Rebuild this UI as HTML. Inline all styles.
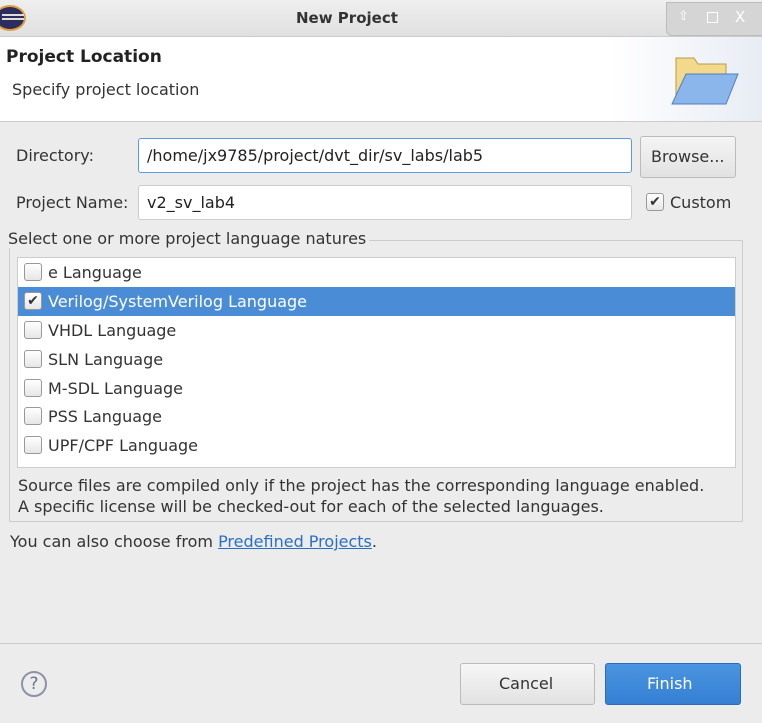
<!DOCTYPE html>
<html><head><style>
body{margin:0;width:762px;height:723px;overflow:hidden;background:#ececec;font-family:"DejaVu Sans","Liberation Sans",sans-serif;font-size:16px;color:#333;position:relative}
.a{position:absolute;white-space:nowrap}
.cb{position:absolute;width:16px;height:16px;border:1px solid #999;border-radius:3px;background:linear-gradient(#fff,#e6e6e6)}
.row{position:absolute;left:18px;width:717px;height:29px}
.row span{position:absolute;left:30px;top:5px}
.row .cb{left:6px;top:5px}
</style></head><body>
<div class="a" style="left:0;top:0;width:762px;height:36px;background:linear-gradient(#efefef,#e0e0e0);border-bottom:1px solid #ccc"></div>
<div class="a" style="left:-6px;top:5px;width:32px;height:26px;border-radius:50%;background:#2c2c5e;border:2px solid #e0a040;box-sizing:border-box"></div>
<div class="a" style="left:2px;top:14px;width:22px;height:2px;background:#ddd;box-shadow:0 4px 0 #ddd"></div>
<div class="a" style="left:296px;top:9px;font-weight:bold;font-size:15px;color:#333">New Project</div>
<div class="a" style="left:666px;top:2px;width:96px;height:32px;background:#d5d5d5;border-radius:0 0 0 6px;border:1px solid #bbb"></div>
<div class="a" style="left:678px;top:9px;font-size:13px;color:#fff">⇧</div>
<div class="a" style="left:707px;top:12px;width:9px;height:9px;border:1px solid #fff"></div>
<div class="a" style="left:735px;top:8px;font-size:15px;color:#fff">X</div>
<div class="a" style="left:0;top:37px;width:762px;height:84px;background:linear-gradient(90deg,#fff 80%,#e8ecf4);border-bottom:1px solid #ccc"></div>
<div class="a" style="left:6px;top:47px;font-weight:bold;font-size:17px;color:#222">Project Location</div>
<div class="a" style="left:12px;top:80px;color:#333">Specify project location</div>
<svg class="a" style="left:666px;top:52px" width="76" height="54"><path d="M10 6h18l4 6h28v38H10z" fill="#f3d98c" stroke="#b99a4a"/><path d="M20 22h52l-12 30H6z" fill="#8ab6ec" stroke="#4f7fbf"/></svg>
<div class="a" style="left:16px;top:146px">Directory:</div>
<div class="a" style="left:138px;top:138px;width:494px;height:35px;background:#fff;border:1px solid #5a9ae6;border-radius:3px;box-sizing:border-box"></div>
<div class="a" style="left:147px;top:146px;color:#222">/home/jx9785/project/dvt_dir/sv_labs/lab5</div>
<div class="a" style="left:640px;top:136px;width:96px;height:42px;border:1px solid #bbb;border-radius:3px;background:linear-gradient(#f4f4f4,#e2e2e2);box-sizing:border-box"></div>
<div class="a" style="left:651px;top:147px">Browse...</div>
<div class="a" style="left:16px;top:193px">Project Name:</div>
<div class="a" style="left:138px;top:185px;width:494px;height:35px;background:#fff;border:1px solid #ccc;border-radius:3px;box-sizing:border-box"></div>
<div class="a" style="left:147px;top:193px;color:#222">v2_sv_lab4</div>
<div class="cb" style="left:646px;top:193px;text-align:center;line-height:16px;font-size:14px;color:#333">✔</div>
<div class="a" style="left:670px;top:193px">Custom</div>
<div class="a" style="left:9px;top:240px;width:734px;height:282px;border:1px solid #ccc;box-sizing:border-box"></div>
<div class="a" style="left:8px;top:229px;background:#ececec;padding-right:3px">Select one or more project language natures</div>
<div class="a" style="left:17px;top:257px;width:719px;height:211px;background:#fff;border:1px solid #ccc;box-sizing:border-box"></div>
<div class="row" style="top:258px"><div class="cb"></div><span>e Language</span></div>
<div class="row" style="top:287px;background:#4a8cd6;color:#fff"><div class="cb" style="text-align:center;line-height:16px;font-size:14px;color:#333">✔</div><span>Verilog/SystemVerilog Language</span></div>
<div class="row" style="top:316px"><div class="cb"></div><span>VHDL Language</span></div>
<div class="row" style="top:345px"><div class="cb"></div><span>SLN Language</span></div>
<div class="row" style="top:374px"><div class="cb"></div><span>M-SDL Language</span></div>
<div class="row" style="top:402px"><div class="cb"></div><span>PSS Language</span></div>
<div class="row" style="top:431px"><div class="cb"></div><span>UPF/CPF Language</span></div>
<div class="a" style="left:18px;top:476px">Source files are compiled only if the project has the corresponding language enabled.</div>
<div class="a" style="left:18px;top:497px">A specific license will be checked-out for each of the selected languages.</div>
<div class="a" style="left:10px;top:532px">You can also choose from <span style="color:#2a6fc0;text-decoration:underline">Predefined Projects</span>.</div>
<div class="a" style="left:0;top:643px;width:762px;height:1px;background:#ccc"></div>
<div class="a" style="left:21px;top:671px;width:22px;height:22px;border:2px solid #8a93a8;border-radius:50%;text-align:center;line-height:22px;font-size:17px;color:#6a7388">?</div>
<div class="a" style="left:460px;top:663px;width:135px;height:42px;border:1px solid #bbb;border-radius:3px;background:linear-gradient(#f6f6f6,#e2e2e2);box-sizing:border-box"></div>
<div class="a" style="left:499px;top:674px">Cancel</div>
<div class="a" style="left:605px;top:663px;width:136px;height:42px;border:1px solid #2a6cc0;border-radius:3px;background:linear-gradient(#4a94e0,#3580d4);box-sizing:border-box"></div>
<div class="a" style="left:647px;top:674px;color:#fff">Finish</div>
</body></html>
